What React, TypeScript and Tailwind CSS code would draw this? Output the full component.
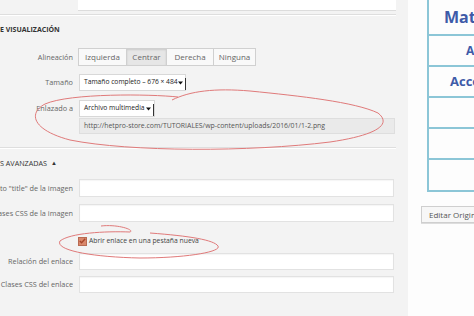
import React from 'react';

// Small native-looking select arrow
const SelectArrow = () => (
  <span className="ml-auto flex h-full items-center">
    <svg width="5" height="4" viewBox="0 0 5 4" className="mr-[2px]">
      <path d="M0 0.5h5L2.5 3.5z" fill="#111" />
    </svg>
    <span className="h-[12px] w-px self-end bg-[#333]" />
  </span>
);

const Label = ({ text }: { text: string }) => (
  <div className="flex w-[73px] shrink-0 justify-end overflow-hidden whitespace-nowrap text-[7.3px] text-[#666]">
    <span>{text}</span>
  </div>
);

const TextRow = ({ label, className }: { label: string; className: string }) => (
  <div className={`flex items-center ${className}`}>
    <Label text={label} />
    <div className="ml-[6px] h-full w-[315px] border border-[#e2e2e2] bg-white shadow-[inset_0_1px_1px_rgba(0,0,0,0.04)]" />
  </div>
);

const alignButtons = [
  { text: 'Izquierda', w: 'w-[49px]', active: false },
  { text: 'Centrar', w: 'w-[40px]', active: true },
  { text: 'Derecha', w: 'w-[47px]', active: false },
  { text: 'Ninguna', w: 'w-[42px]', active: false },
];

const App = () => {
  return (
    <div
      className="relative flex h-[316px] w-[474px] overflow-hidden bg-white"
      style={{ fontFamily: '"Open Sans", "Liberation Sans", sans-serif' }}
    >
      {/* settings panel */}
      <div className="h-full w-[408px] shrink-0 bg-[#f3f3f3]">
        <div className="ml-[78px] h-[11px] w-[318px] border-b border-[#dcdcdc] bg-white" />
        <div className="mt-[3px] w-[396px] border-t border-[#dedede] border-b border-b-white" />

        <div className="mt-[9px] h-[10px] whitespace-nowrap text-[7px] font-bold leading-[10px] text-[#333]">
          E VISUALIZACIÓN
        </div>

        <div className="mt-[13px] flex h-[18px] items-center">
          <Label text="Alineación" />
          <div className="ml-[5px] flex h-full">
            {alignButtons.map((b, i) => (
              <div
                key={b.text}
                className={`flex h-full items-center justify-center border border-[#d0d0d0] text-[8px] text-[#666] ${b.w} ${
                  i > 0 ? 'border-l-0' : ''
                } ${b.active ? 'bg-[#e6e6e6] shadow-[inset_0_1px_2px_rgba(0,0,0,0.12)]' : 'bg-[#f9f9f9]'}`}
              >
                {b.text}
              </div>
            ))}
          </div>
        </div>

        <div className="mt-[8px] flex h-[17px] items-center">
          <Label text="Tamaño" />
          <div className="ml-[6px] flex h-full w-[107px] items-center border border-[#d8d8d8] bg-white pl-[4px] text-[6.7px] text-[#222]">
            <span className="whitespace-nowrap">Tamaño completo – 676 × 484</span>
            <SelectArrow />
          </div>
        </div>

        <div className="mt-[9px] flex h-[17px] items-center">
          <Label text="Enlazado a" />
          <div className="ml-[6px] flex h-full w-[76px] items-center border border-[#d8d8d8] bg-white pl-[4px] text-[6.7px] text-[#222]">
            <span className="whitespace-nowrap">Archivo multimedia</span>
            <SelectArrow />
          </div>
        </div>

        <div className="ml-[79px] mt-[1px] flex h-[16px] w-[316px] items-center border border-[#dedede] bg-[#eaeaea] pl-[4px] text-[6.9px] text-[#555]">
          <span className="whitespace-nowrap">http://hetpro-store.com/TUTORIALES/wp-content/uploads/2016/01/1-2.png</span>
        </div>

        <div className="mt-[13px] w-[396px] border-t border-[#dedede] border-b border-b-white" />

        <div className="mt-[9px] flex h-[10px] items-center whitespace-nowrap text-[7.2px] leading-[10px] text-[#333]">
          <span>S AVANZADAS</span>
          <span className="ml-[4px] text-[6px]">▲</span>
        </div>

        <TextRow label='Atributo "title" de la imagen' className="mt-[11px] h-[18px]" />
        <TextRow label="Clases CSS de la imagen" className="mt-[7px] h-[18px]" />

        <div className="mt-[14px] flex h-[10px] items-center">
          <div className="ml-[78px] flex h-[9px] w-[9px] items-center justify-center border border-[#b86a52] bg-[#d9876b]">
            <svg width="7" height="6" viewBox="0 0 7 6">
              <path d="M0.8 3l1.8 1.8L6.2 0.8" stroke="#a5452a" strokeWidth="1.3" fill="none" />
            </svg>
          </div>
          <span className="ml-[2px] whitespace-nowrap text-[6.8px] text-[#444]">Abrir enlace en una pestaña nueva</span>
        </div>

        <TextRow label="Relación del enlace" className="mt-[7px] h-[17px]" />
        <TextRow label="Clases CSS del enlace" className="mt-[6px] h-[17px]" />
      </div>

      {/* preview column */}
      <div className="h-full flex-1 bg-[#fdfdfd]">
        <div className="ml-[19px] w-[70px] border-b-2 border-l-2 border-[#8cc6d7] font-bold text-[#3e5ba8]">
          <div className="flex h-[36px] items-center border-b-2 border-[#8cc6d7] pl-[15px] text-[16px] whitespace-nowrap">
            Material
          </div>
          <div className="flex h-[31px] items-center border-b-2 border-[#8cc6d7] pl-[37px] text-[12px] whitespace-nowrap">
            Arduino
          </div>
          <div className="flex h-[31px] items-center border-b-2 border-[#8cc6d7] pl-[21px] text-[13px] whitespace-nowrap">
            Accesorios
          </div>
          <div className="h-[31px] border-b-2 border-[#8cc6d7]" />
          <div className="h-[31px] border-b-2 border-[#8cc6d7]" />
          <div className="h-[30px]" />
        </div>
        <div className="ml-[13px] mt-[14px] flex h-[17px] w-[70px] items-center whitespace-nowrap border border-[#cfcfcf] bg-[#f7f7f7] pl-[7px] text-[8px] text-[#555] shadow-[0_1px_0_#ddd]">
          Editar Original
        </div>
      </div>

      {/* red hand-drawn annotations */}
      <svg className="pointer-events-none absolute left-0 top-0" width="474" height="316" viewBox="0 0 474 316">
        <path
          d="M178 97 C150 94 70 93 45 104 C28 113 32 130 70 140 C130 152 250 152 330 142 C378 135 392 124 378 113 C355 102 300 96 250 91 C215 88 190 91 172 100"
          stroke="#e07a7a"
          strokeWidth="1"
          fill="none"
        />
        <path
          d="M101 226 C118 224 135 230 130 232 C105 231 70 233 60 241 C55 250 90 257 140 258 C185 258 222 252 218 246 C214 240 190 236 150 233"
          stroke="#e07a7a"
          strokeWidth="1"
          fill="none"
        />
      </svg>
    </div>
  );
};

export default App;
